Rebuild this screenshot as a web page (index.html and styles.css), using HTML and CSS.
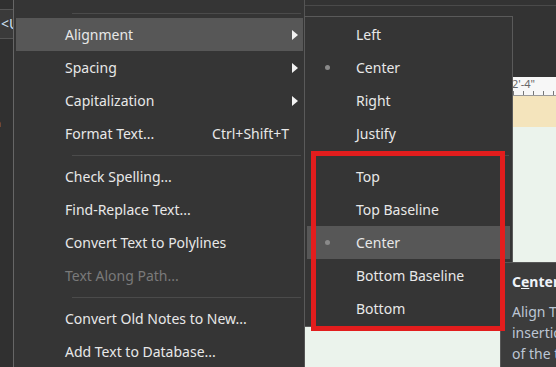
FILE: index.html
```html
<!DOCTYPE html>
<html lang="en">
<head>
    <meta charset="UTF-8">
    <title>Text menu - Alignment</title>
    <link rel="stylesheet" href="styles.css">
</head>
<body>

    <div class="app">
        <aside class="side">
            <div class="side-tab">&lt;U</div>
            <div class="side-mark">n</div>
        </aside>
        <div class="work">
            <div class="toolbar">
                <div class="toolbar-row"></div>
            </div>
            <div class="ruler">
                <span class="ruler-label">2'-4"</span>
            </div>
            <div class="band"></div>
            <div class="canvas"></div>
        </div>
    </div>

    <!-- context menu -->
    <ul class="menu main-menu">
        <li class="sep"></li>
        <li class="item has-sub active"><span class="label">Alignment</span></li>
        <li class="item has-sub"><span class="label">Spacing</span></li>
        <li class="item has-sub"><span class="label">Capitalization</span></li>
        <li class="item"><span class="label">Format Text...</span><span class="key">Ctrl+Shift+T</span></li>
        <li class="sep"></li>
        <li class="item"><span class="label">Check Spelling...</span></li>
        <li class="item"><span class="label">Find-Replace Text...</span></li>
        <li class="item"><span class="label">Convert Text to Polylines</span></li>
        <li class="item disabled"><span class="label">Text Along Path...</span></li>
        <li class="sep"></li>
        <li class="item"><span class="label">Convert Old Notes to New...</span></li>
        <li class="item"><span class="label">Add Text to Database...</span></li>
    </ul>

    <!-- alignment submenu -->
    <ul class="menu sub-menu">
        <li class="item"><span class="mark"></span><span class="label">Left</span></li>
        <li class="item checked"><span class="mark"></span><span class="label">Center</span></li>
        <li class="item"><span class="mark"></span><span class="label">Right</span></li>
        <li class="item"><span class="mark"></span><span class="label">Justify</span></li>
        <li class="sep"></li>
        <li class="item"><span class="mark"></span><span class="label">Top</span></li>
        <li class="item"><span class="mark"></span><span class="label">Top Baseline</span></li>
        <li class="item checked active"><span class="mark"></span><span class="label">Center</span></li>
        <li class="item"><span class="mark"></span><span class="label">Bottom Baseline</span></li>
        <li class="item"><span class="mark"></span><span class="label">Bottom</span></li>
    </ul>

    <div class="tooltip">
        <p class="tip-title">C<u>e</u>nter</p>
        <p class="tip-text">Align Text vertically so the<br>insertion point is at the center<br>of the text block.</p>
    </div>

    <div class="highlight-box"></div>

</body>
</html>
```

FILE: styles.css
```css
body {
    font-family: "Noto Sans", "Open Sans", sans-serif;
    font-size: 14px;
    margin: 0;
    padding: 0;
    width: 556px;
    height: 367px;
    overflow: hidden;
    position: relative;
    background-color: #333333;
    color: #e8e8e8;
}

.app {
    display: flex;
    height: 367px;
}

.side {
    width: 13px;
    flex: none;
    background-color: #303030;
    overflow: hidden;
    padding-top: 9px;
}

.side-tab {
    height: 28px;
    border-top: 1px solid #555555;
    border-bottom: 1px solid #555555;
    background-color: #3a3a3a;
    color: #cfe0f5;
    font-size: 14px;
    line-height: 28px;
    padding-left: 1px;
    white-space: nowrap;
    overflow: hidden;
}

.side-mark {
    margin-top: 76px;
    margin-left: -6px;
    font-size: 11px;
    color: #e8e8e8;
}

.work {
    flex: 1;
    display: flex;
    flex-direction: column;
}

.toolbar {
    height: 77px;
    padding-top: 5px;
    box-sizing: border-box;
    background-color: #333333;
}

.toolbar-row {
    border-top: 1px solid #4a4a4a;
}

.ruler {
    height: 18px;
    background-color: #f7f7f7;
    border-bottom: 1px solid #9a9a9a;
    position: relative;
    background-image: repeating-linear-gradient(90deg, #777777 0, #777777 1px, transparent 1px, transparent 10px);
    background-size: 100% 4px;
    background-position: 500px 100%;
    background-repeat: no-repeat;
}

.ruler-label {
    display: block;
    margin-left: 499px;
    margin-top: 1px;
    font-size: 11px;
    line-height: 11px;
    color: #666666;
}

.band {
    height: 31px;
    background-color: #f4e4bc;
}

.canvas {
    flex: 1;
    background-color: #ebf3ec;
}

/* menus */
.menu {
    list-style: none;
    margin: 0;
    padding: 0;
    position: absolute;
    background-color: #353535;
}

.main-menu {
    left: 13px;
    top: 0;
    width: 290px;
    height: 400px;
    padding-top: 8px;
    border-left: 1px solid #666666;
    border-right: 1px solid #555555;
}

.sub-menu {
    left: 304px;
    top: 16px;
    width: 207px;
    padding: 1px 0;
    border: 1px solid #5a5a5a;
}

.sep {
    height: 1px;
    margin: 5px 3px 4px 58px;
    background-color: #4b4b4b;
}

.sub-menu .sep {
    margin-left: 20px;
}

.item {
    height: 33px;
    display: flex;
    align-items: center;
    margin: 0 1px 0 2px;
    white-space: nowrap;
}

.main-menu .label {
    padding-left: 49px;
}

.label {
    flex: 1;
}

.key {
    padding-right: 14px;
}

.item.active {
    background-color: #575757;
}

.item.disabled {
    color: #7a7a7a;
}

.has-sub::after {
    content: "";
    width: 0;
    height: 0;
    border-left: 6px solid #f2f2f2;
    border-top: 5px solid transparent;
    border-bottom: 5px solid transparent;
    margin-right: 5px;
}

.sub-menu .item {
    margin: 0 2px;
}

.mark {
    width: 49px;
    flex: none;
}

.checked .mark::before {
    content: "";
    display: block;
    width: 5px;
    height: 5px;
    margin-left: 18px;
    border-radius: 50%;
    background-color: #8a8a8a;
}

/* tooltip */
.tooltip {
    position: absolute;
    left: 500px;
    top: 262px;
    width: 240px;
    height: 130px;
    padding: 8px 11px;
    background-color: #3c3c3c;
    border: 1px solid #585858;
}

.tooltip p {
    margin: 0;
}

.tip-title {
    font-weight: bold;
    color: #eef2f8;
    line-height: 22px;
}

.tip-text {
    margin-top: 8px !important;
    color: #bcc6d4;
    line-height: 21px;
}

/* annotation */
.highlight-box {
    position: absolute;
    left: 311px;
    top: 151px;
    width: 194px;
    height: 180px;
    box-sizing: border-box;
    border: 5px solid #e21d1d;
}
```
